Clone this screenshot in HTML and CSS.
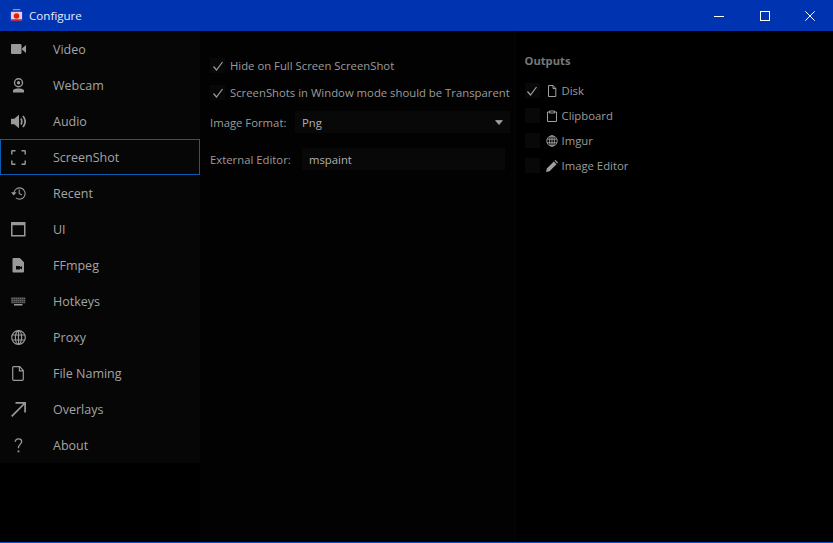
FILE: index.html
```html
<!DOCTYPE html>
<html lang="en">
<head>
<meta charset="utf-8">
<title>Configure</title>
<link rel="stylesheet" href="styles.css">
</head>
<body>
<div class="window">
  <header class="titlebar">
    <svg class="app-icon" viewBox="0 0 16 14" width="15" height="13"><rect x="0" y="2" width="16" height="12" fill="#0a2fd0"/><rect x="2" y="3" width="12" height="9" fill="#d8d4e0"/><rect x="2" y="11" width="12" height="2" fill="#b03050"/><rect x="4" y="0" width="8" height="1.400" fill="#c98a5a"/><circle cx="8" cy="7.500" r="3" fill="#f01808"/></svg>
    <span class="title">Configure</span>
    <div class="caption-buttons">
      <button class="cap"><svg width="10" height="10" viewBox="0 0 10 10"><path d="M0 5.500H10" stroke="#fff" fill="none"/></svg></button>
      <button class="cap"><svg width="10" height="10" viewBox="0 0 10 10"><rect x=".5" y=".5" width="9" height="9" stroke="#fff" fill="none"/></svg></button>
      <button class="cap"><svg width="10" height="10" viewBox="0 0 10 10"><path d="M.3.3l9.400 9.400M9.700.3L.3 9.700" stroke="#fff" fill="none"/></svg></button>
    </div>
  </header>
  <div class="body">
    <nav class="sidebar">
      <div class="nav-item"><svg class="nav-icon" viewBox="0 0 15 15"><path d="M1 2h8.500a1 1 0 0 1 1 1v8a1 1 0 0 1-1 1H1a1 1 0 0 1-1-1V3a1 1 0 0 1 1-1zM11 6.500L15 3v8l-4-3.500z"/></svg><span>Video</span></div>
      <div class="nav-item"><svg class="nav-icon" viewBox="0 0 15 15"><path fill-rule="evenodd" d="M7.500 0a4.700 4.700 0 1 1 0 9.400 4.700 4.700 0 0 1 0-9.400zm0 1.400a3.300 3.300 0 1 0 0 6.600 3.300 3.300 0 0 0 0-6.600zM7.500 3a1.700 1.700 0 1 1 0 3.400 1.700 1.700 0 0 1 0-3.400zM2 12c2-1.300 3-1.600 5.500-1.600S11 10.700 13 12v2.500H2z"/></svg><span>Webcam</span></div>
      <div class="nav-item"><svg class="nav-icon" viewBox="0 0 15 15"><path d="M0 4.800h3.200L8 .8v13.400l-4.800-4H0z"/><path d="M10 4.500c1 1.900 1 4.100 0 6M12 2c2.600 3.300 2.600 7.700 0 11" fill="none" stroke="currentColor" stroke-width="1.700"/></svg><span>Audio</span></div>
      <div class="nav-item active"><svg class="nav-icon" viewBox="0 0 15 15"><path d="M.8 4.500V1.200a.5.5 0 0 1 .5-.5h3.200M10.500.7h3.200a.5.5 0 0 1 .5.5v3.300M14.200 10.500v3.300a.5.5 0 0 1-.5.5h-3.200M4.500 14.300H1.300a.5.5 0 0 1-.5-.5v-3.300" fill="none" stroke="currentColor" stroke-width="1.400"/></svg><span>ScreenShot</span></div>
      <div class="nav-item"><svg class="nav-icon" viewBox="0 0 15 15"><path d="M2.900 7a5.600 5.600 0 1 1 2 4.800M8.200 3.600V7.500l2.800 1.600" fill="none" stroke="currentColor" stroke-width="1.100"/><path d="M0 6.300h5.500L2.800 9.500z"/></svg><span>Recent</span></div>
      <div class="nav-item"><svg class="nav-icon" viewBox="0 0 15 15"><path fill-rule="evenodd" d="M0 0h14.500v14.500H0zM1.500 3.300v9.700h11.500V3.300z"/></svg><span>UI</span></div>
      <div class="nav-item"><svg class="nav-icon" viewBox="0 0 15 15"><path fill-rule="evenodd" d="M2.500 0h6.300L13 4.200v9.300a1 1 0 0 1-1 1H2.500a1 1 0 0 1-1-1V1a1 1 0 0 1 1-1zM5 8v3.500h4v-1.200l2 1.200V8L9 9.200V8z"/></svg><span>FFmpeg</span></div>
      <div class="nav-item"><svg class="nav-icon" viewBox="0 0 15 15"><path d="M0 3.200h14.500v6.300H0z" opacity=".28"/><path d="M.7 4.200h13.100M.7 6.200h13.100M.7 8.200h13.100" fill="none" stroke="currentColor" stroke-dasharray="1 1" stroke-width="1.100"/><path d="M3 10h8.500v1.500H3z"/></svg><span>Hotkeys</span></div>
      <div class="nav-item"><svg class="nav-icon" viewBox="0 0 15 15"><g fill="none" stroke="currentColor" stroke-width="1.200"><circle cx="7.500" cy="7.500" r="6.800"/><ellipse cx="7.500" cy="7.500" rx="3.100" ry="6.800"/><path d="M7.500.7v13.600M1.200 5h12.600M1.200 10h12.600"/></g></svg><span>Proxy</span></div>
      <div class="nav-item"><svg class="nav-icon" viewBox="0 0 15 15"><path d="M2.700.7h6l3.600 3.800v8.800a1 1 0 0 1-1 1H2.700a1 1 0 0 1-1-1V1.700a1 1 0 0 1 1-1zM8.400.7v4.200h3.900" fill="none" stroke="currentColor" stroke-width="1.200"/></svg><span>File Naming</span></div>
      <div class="nav-item"><svg class="nav-icon" viewBox="0 0 15 15"><path d="M.7 14.300L14 1M4.500.9h9.600v9.600" fill="none" stroke="currentColor" stroke-width="1.700"/></svg><span>Overlays</span></div>
      <div class="nav-item"><svg class="nav-icon" viewBox="0 0 15 15"><path d="M4.200 3.800C4.400 1.800 5.700.8 7.500.8c1.900 0 3.200 1.100 3.200 2.800 0 2.700-3.200 2.900-3.200 6v.7" fill="none" stroke="currentColor" stroke-width="1.300"/><path d="M6.600 12.500h1.800v1.800H6.600z"/></svg><span>About</span></div>
    </nav>
    <main class="settings">
      <div class="col-left">
        <div class="check-row first"><span class="check on"><svg viewBox="0 0 12 12" width="12" height="12"><path d="M1.500 6.500l3 3.500 6-8"/></svg></span><span>Hide on Full Screen ScreenShot</span></div>
        <div class="check-row"><span class="check on"><svg viewBox="0 0 12 12" width="12" height="12"><path d="M1.500 6.500l3 3.500 6-8"/></svg></span><span>ScreenShots in Window mode should be Transparent</span></div>
        <div class="field-row format"><label>Image Format:</label><div class="select"><span>Png</span><svg viewBox="0 0 8 5" width="8" height="5"><path d="M.6.6h6.800L4 4.600z" stroke="#a0a0a0" stroke-width=".8" stroke-linejoin="round"/></svg></div></div>
        <div class="field-row editor"><label>External Editor:</label><div class="input">mspaint</div></div>
      </div>
      <aside class="col-right">
        <h2>Outputs</h2>
        <div class="out-row"><span class="check on"><svg viewBox="0 0 12 12" width="12" height="12"><path d="M1.500 6.500l3 3.500 6-8"/></svg></span><svg class="out-icon" viewBox="0 0 12 12"><path d="M2.500.5h4.500l2.800 3v8H2.500zM7 .5v3h2.800" fill="none" stroke="currentColor"/></svg><span>Disk</span></div>
        <div class="out-row"><span class="check"></span><svg class="out-icon" viewBox="0 0 12 12"><path d="M3.500 2H1.500v9.500h9V2H8.500M3.500 1h5v2h-5z" fill="none" stroke="currentColor"/></svg><span>Clipboard</span></div>
        <div class="out-row"><span class="check"></span><svg class="out-icon" viewBox="0 0 12 12"><g fill="none" stroke="currentColor" stroke-width=".9"><circle cx="6" cy="6" r="5.200"/><ellipse cx="6" cy="6" rx="2.400" ry="5.200"/><path d="M6 .8v10.400M1.200 4.200h9.600M1.200 7.800h9.600"/></g></svg><span>Imgur</span></div>
        <div class="out-row"><span class="check"></span><svg class="out-icon" viewBox="0 0 12 12"><path d="M0 12l.8-3.500L7.800 1.500l2.700 2.700-7 7zM8.500.8l1-.8L12 2.500l-.8 1z"/></svg><span>Image Editor</span></div>
      </aside>
    </main>
  </div>
</div>
</body>
</html>
```
FILE: styles.css
```css
* { box-sizing: border-box; }
html, body { margin: 0; height: 100%; background: #000; }
body { font-family: "Open Sans", sans-serif; font-size: 12.500px; color: #9c9c9c; overflow: hidden; }
.window { height: 543px; display: flex; flex-direction: column; border-bottom: 1px solid #0a50c0; }
.titlebar { height: 31px; flex: none; background: #0033b0; display: flex; align-items: center; padding-left: 9px; color: #fff; }
.app-icon { margin-right: 5px; }
.title { font-size: 11.600px; color: #e6ecfa; }
.caption-buttons { margin-left: auto; display: flex; }
.cap { width: 45.500px; height: 31px; background: none; border: 0; padding: 0; display: flex; align-items: center; justify-content: center; }
.body { flex: 1; display: flex; align-items: flex-start; min-height: 0; }
.sidebar { width: 200px; flex: none; background: #060606; display: flex; flex-direction: column; }
.nav-item { height: 36px; display: flex; align-items: center; padding-left: 11px; color: #a4a4a4; }
.nav-item.active { border: 1px solid #0a5cb0; padding-left: 10px; }
.nav-icon { width: 15px; height: 15px; fill: currentColor; margin-right: 27px; color: #999; flex: none; }
.settings { flex: 1; display: flex; align-self: stretch; font-size: 11.320px; white-space: nowrap; }
.col-left { width: 316px; flex: none; border-right: 1px solid #050505; padding: 0 0 0 10px; background: #020202; }
.check-row { display: flex; align-items: center; height: 20px; margin-top: 7px; }
.check-row.first { margin-top: 24.500px; }
.check { width: 15px; height: 15px; background: #080808; display: flex; align-items: center; justify-content: center; margin-right: 5px; flex: none; }
.check svg { fill: none; stroke: #a0a0a0; stroke-width: 1.200; }
.field-row { display: flex; align-items: center; }
.field-row.format { margin-top: 8.500px; }
.field-row.editor { margin-top: 15px; }
.field-row label { width: 85px; flex: none; }
.editor label { width: 92px; }
.select { width: 215px; height: 22px; background: #080808; display: flex; align-items: center; justify-content: space-between; padding: 0 7px; color: #b0b0b0; }
.select svg { fill: #a0a0a0; }
.input { width: 203px; height: 22px; background: #080808; display: flex; align-items: center; padding-left: 7px; color: #b0b0b0; }
.col-right { padding: 21px 0 0 8.500px; flex: 1; }
.col-right h2 { margin: 0 0 9px; font-size: 11.200px; font-weight: 700; color: #787878; line-height: 17px; }
.out-row { display: flex; align-items: center; height: 25px; }
.out-icon { width: 12px; height: 12px; fill: currentColor; margin: 0 4px 0 1px; color: #a0a0a0; flex: none; }
.out-row .check { margin-right: 5px; }
```
